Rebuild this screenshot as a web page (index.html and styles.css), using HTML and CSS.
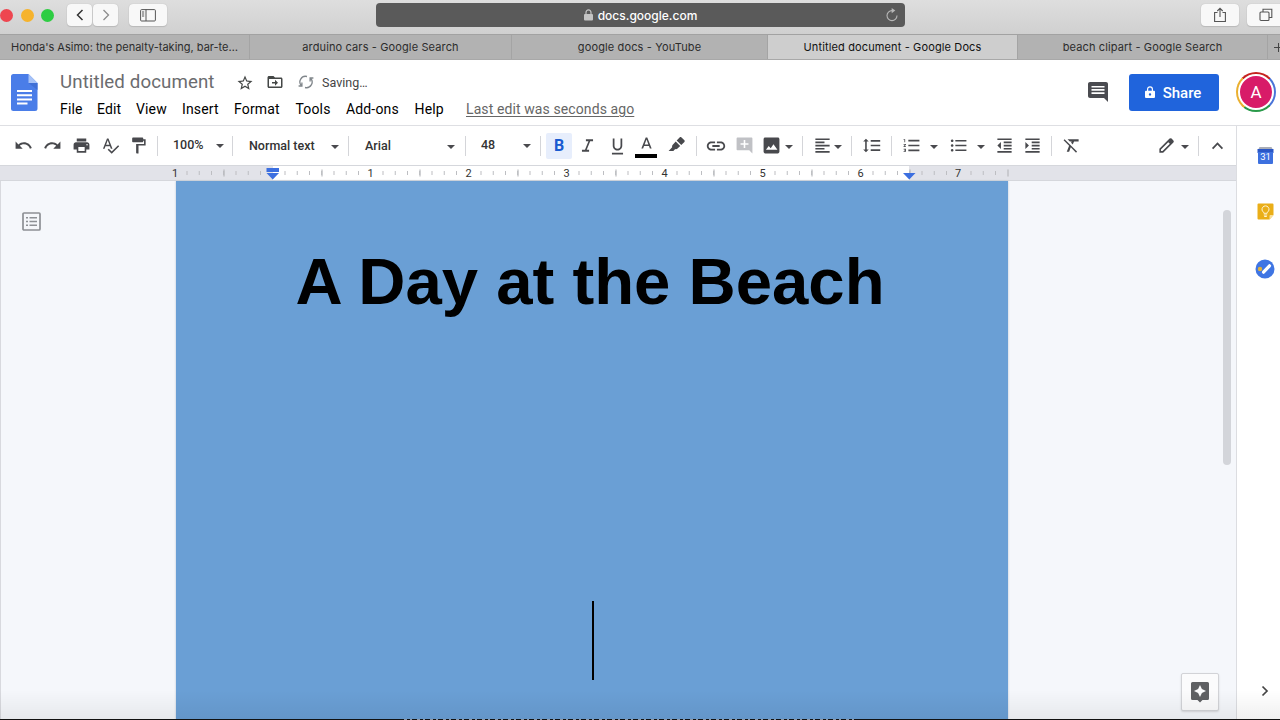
FILE: index.html
```html
<!DOCTYPE html>
<html lang="en">
<head>
  <meta charset="UTF-8">
  <title>Untitled document - Google Docs</title>
  <link rel="stylesheet" href="styles.css">
</head>
<body>
  <div class="titlebar">
    <div class="lights">
      <span class="light red"></span>
      <span class="light yellow"></span>
      <span class="light green"></span>
    </div>
    <div class="nav-btns">
      <span class="win-btn"><svg width="8" height="12" viewBox="0 0 8 12"><path d="M6.5 1 1.5 6l5 5" fill="none" stroke="#333" stroke-width="1.5"/></svg></span>
      <span class="win-btn"><svg width="8" height="12" viewBox="0 0 8 12"><path d="M1.5 1l5 5-5 5" fill="none" stroke="#8c8c8c" stroke-width="1.3"/></svg></span>
    </div>
    <span class="win-btn wide"><svg width="16" height="13" viewBox="0 0 16 13" fill="none" stroke="#555"><rect x=".6" y=".6" width="14.8" height="11.4" rx="1"/><path d="M6 .5v11.5M2 3h2.2M2 5h2.2M2 7h2.2"/></svg></span>
    <div class="address">
      <svg width="9" height="12" viewBox="0 0 9 12"><path d="M2 5V3.4a2.5 2.5 0 0 1 5 0V5" fill="none" stroke="#c4c4c4" stroke-width="1.2"/><rect y="5" width="9" height="6.5" rx="1" fill="#c4c4c4"/></svg>
      <span>docs.google.com</span>
      <svg class="reload" width="14" height="14" viewBox="0 0 14 14"><path d="M7 2.600A5 5 0 1 0 12 7.600" fill="none" stroke="#b8b8b8" stroke-width="1.1"/><path d="M6.7 0l3.6 2.6-3.6 2.6z" fill="#b8b8b8"/></svg>
    </div>
    <span class="win-btn wide share-page"><svg width="14" height="16" viewBox="0 0 14 16" fill="none" stroke="#555" stroke-width="1.1"><path d="M4.5 5.5H1.6v9h10.8v-9H9.5M7 10V1.5M4.3 4 7 1.3 9.7 4"/></svg></span>
    <span class="win-btn wide"><svg width="14" height="14" viewBox="0 0 14 14" fill="none" stroke="#555" stroke-width="1.1"><rect x="1" y="4" width="9" height="8.5" rx="1"/><path d="M4 4V1.3h8.8V9.500H10"/></svg></span>
  </div>

  <div class="tabs">
    <div class="tab first">Honda's Asimo: the penalty-taking, bar-te…</div>
    <div class="tab">arduino cars - Google Search</div>
    <div class="tab">google docs - YouTube</div>
    <div class="tab active">Untitled document - Google Docs</div>
    <div class="tab">beach clipart - Google Search</div>
    <div class="new-tab"><svg width="9" height="9" viewBox="0 0 9 9"><path d="M0 4.500h9M4.500 0v9" stroke="#444"/></svg></div>
  </div>

  <header class="header">
    <svg class="docs-logo" width="27" height="37" viewBox="0 0 27 37">
      <path d="M2.500 0H17.500L26.500 9V34.500a2.500 2.500 0 0 1-2.500 2.500H2.500A2.500 2.500 0 0 1 0 34.500V2.500A2.500 2.500 0 0 1 2.500 0z" fill="#4a7de8"/>
      <path d="M17.500 0l9 9h-9z" fill="#a6c2f7"/>
      <path d="M17.500 9h9v7z" fill="#3f6fd6"/>
      <path d="M6 17h15M6 21.200h15M6 25.400h15M6 29.600h10.500" stroke="#fff" stroke-width="2"/>
    </svg>
    <div class="doc-info">
      <div class="doc-row">
        <span class="doc-title">Untitled document</span>
        <svg class="star" width="18" height="18" viewBox="0 0 24 24" fill="#444746"><path d="M22 9.240l-7.190-.62L12 2 9.190 8.630 2 9.240l5.460 4.730L5.820 21 12 17.270 18.180 21l-1.630-7.030L22 9.240zM12 15.400l-3.760 2.270 1-4.280-3.320-2.880 4.380-.38L12 6.100l1.710 4.040 4.380.38-3.320 2.880 1 4.280L12 15.400z"/></svg>
        <svg class="move" width="18" height="18" viewBox="0 0 24 24" fill="#444746"><path d="M20 6h-8l-2-2H4c-1.100 0-2 .9-2 2v12c0 1.100.9 2 2 2h16c1.100 0 2-.9 2-2V8c0-1.100-.9-2-2-2zm0 12H4V8h16V18zm-8-1l4-4-4-4v3H8v2h4z"/></svg>
        <svg class="sync" width="16" height="16" viewBox="0 0 16 16" fill="none" stroke="#80868b" stroke-width="1.300"><path d="M3.500 11.800A5.600 5.600 0 0 1 9 2.500M12.500 4.200A5.600 5.600 0 0 1 7 13.500M.6 12h3.300V8.500M15.400 4h-3.300v3.500"/></svg>
        <span class="saving">Saving…</span>
      </div>
      <nav class="menu">
        <span>File</span>
        <span>Edit</span>
        <span>View</span>
        <span>Insert</span>
        <span>Format</span>
        <span>Tools</span>
        <span>Add-ons</span>
        <span>Help</span>
        <span class="last-edit">Last edit was seconds ago</span>
      </nav>
    </div>
    <svg class="comments" width="24" height="24" viewBox="0 0 24 24" fill="#4a4b50"><path d="M22 4c0-1.100-.9-2-2-2H4c-1.100 0-2 .9-2 2v12c0 1.100.9 2 2 2h14l4 4V4zM18.500 14H5.500v-1.700h13V14zm0-3.200H5.500V9.100h13v1.700zm0-3.200H5.500V5.900h13v1.700z"/></svg>
    <div class="share">
      <svg width="10" height="13" viewBox="0 0 10 13"><path d="M2.600 5V3.200a2.400 2.400 0 0 1 4.800 0V5" fill="none" stroke="#fff" stroke-width="1.200"/><path d="M1 4.700h8a1 1 0 0 1 1 1V11a1 1 0 0 1-1 1H1a1 1 0 0 1-1-1V5.700a1 1 0 0 1 1-1zm4 2.500a1.200 1.200 0 1 0 0 2.400 1.200 1.200 0 0 0 0-2.400z" fill="#fff"/></svg>
      <span>Share</span>
    </div>
    <div class="avatar"><span>A</span></div>
  </header>

  <div class="workspace">
    <main class="editor">
      <div class="toolbar">
        <svg class="ic" viewBox="0 0 24 24"><path d="M12.500 8c-2.650 0-5.050.99-6.900 2.600L2 7v9h9l-3.620-3.620c1.390-1.160 3.160-1.880 5.120-1.880 3.540 0 6.550 2.310 7.600 5.500l2.370-.78C21.080 11.030 17.150 8 12.500 8z"/></svg>
        <svg class="ic" viewBox="0 0 24 24"><path d="M18.400 10.600C16.550 8.990 14.150 8 11.500 8c-4.650 0-8.580 3.030-9.960 7.220L3.900 16c1.050-3.190 4.050-5.500 7.600-5.500 1.950 0 3.730.72 5.120 1.880L13 16h9V7l-3.600 3.600z"/></svg>
        <svg class="ic" viewBox="0 0 24 24"><path d="M19 8H5c-1.660 0-3 1.340-3 3v6h4v4h12v-4h4v-6c0-1.660-1.340-3-3-3zm-3 11H8v-5h8v5zm3-7c-.55 0-1-.45-1-1s.45-1 1-1 1 .45 1 1-.45 1-1 1zm-1-9H6v4h12V3z"/></svg>
        <svg class="ic" viewBox="0 0 24 24"><path d="M12.450 16h2.090L9.430 3H7.570L2.460 16h2.090l1.120-3h5.640l1.140 3zm-6.020-5L8.500 5.480 10.570 11H6.430zm15.160.59l-8.090 8.090L9.830 16l-1.410 1.410 5.090 5.090L23 13l-1.410-1.410z"/></svg>
        <svg class="ic" viewBox="0 0 24 24"><path d="M18 4V3c0-.55-.45-1-1-1H5c-.55 0-1 .45-1 1v4c0 .55.450 1 1 1h12c.55 0 1-.45 1-1V6h1v4H9v11c0 .55.450 1 1 1h2V12h9V4h-3z"/></svg>
        <i class="sep"></i>
        <div class="select zoom">100%<i class="caret"></i></div>
        <i class="sep"></i>
        <div class="select">Normal text<i class="caret"></i></div>
        <i class="sep"></i>
        <div class="select">Arial<i class="caret"></i></div>
        <i class="sep"></i>
        <div class="select size">48<i class="caret"></i></div>
        <i class="sep"></i>
        <div class="bold">B</div>
        <svg class="ic" viewBox="0 0 24 24"><path d="M10 4v2.500h3.200L8.800 17.500H5V20h9v-2.500h-3L15.400 6.500H19V4z"/></svg>
        <svg class="ic underline" viewBox="0 0 24 24"><path d="M12 17c3.310 0 6-2.690 6-6V2h-2.200v9c0 2.200-1.600 3.900-3.800 3.900S8.200 13.200 8.200 11V2H6v9c0 3.310 2.690 6 6 6zm-7 3v2.200h14V20H5z"/></svg>
        <div class="color"><svg class="ic" viewBox="0 0 24 24"><path d="M11 3L5.500 17h2.250l1.120-3h6.250l1.120 3h2.250L13 3h-2zm-1.380 9L12 5.670 14.380 12H9.620z"/></svg></div>
        <svg class="ic" viewBox="0 0 24 24"><path d="M18 1.500l4 4c.6.600.6 1.400 0 2l-4 4-5.800-5.800 4-4c.6-.6 1.300-.6 1.800-.2zM11 7l5.700 5.700-3.700 3.500c-.6.6-1.700.7-2.600.3L8 19H2l4.500-4.700c-.3-1-.2-2 .5-2.800z"/></svg>
        <i class="sep"></i>
        <svg class="ic link" viewBox="0 0 24 24"><path d="M3.900 12c0-1.710 1.390-3.100 3.100-3.100h4V7H7c-2.760 0-5 2.240-5 5s2.240 5 5 5h4v-1.900H7c-1.710 0-3.100-1.390-3.100-3.100zM8 13h8v-2H8v2zm9-6h-4v1.900h4c1.710 0 3.100 1.390 3.100 3.100s-1.390 3.100-3.100 3.100h-4V17h4c2.760 0 5-2.240 5-5s-2.240-5-5-5z"/></svg>
        <svg class="ic disabled" viewBox="0 0 24 24"><path d="M22 3c0-.55-.45-1-1-1H3c-.55 0-1 .45-1 1v14c0 .55.450 1 1 1h15l4 4V3zm-5 8h-4v4h-2v-4H7V9h4V5h2v4h4v2z"/></svg>
        <svg class="ic" viewBox="0 0 24 24"><path d="M22 20V4c0-1.100-.9-2-2-2H4c-1.100 0-2 .9-2 2v16c0 1.100.9 2 2 2h16c1.100 0 2-.9 2-2zM5 17.500l3.500-5 2.500 3 3.500-5 5 7z"/></svg>
        <i class="caret"></i>
        <i class="sep"></i>
        <svg class="ic" viewBox="0 0 24 24"><path d="M14.500 15H3v2.200h11.500V15zm0-8H3v2.200h11.500V7zM3 13.200h18V11H3v2.200zM3 21.200h18V19H3v2.200zM3 3v2.200h18V3H3z"/></svg>
        <i class="caret"></i>
        <i class="sep"></i>
        <svg class="ic" viewBox="0 0 24 24"><path d="M6 7h2.500L5 3.500 1.500 7H4v10H1.500L5 20.500 8.500 17H6V7zm5-2v2.200h12V5H11zm0 14h12v-2.200H11V19zm0-5.900h12v-2.200H11v2.200z"/></svg>
        <i class="sep"></i>
        <svg class="ic" viewBox="0 0 24 24"><path d="M2 17h2v.5H3v1h1v.5H2v1h3v-4H2v1zm1-9h1V4H2v1h1v3zm-1 3h1.800L2 13.100v.9h3v-1H3.200L5 10.900V10H2v1zm6-6.200V7h14V4.800H8zM8 19.200h14V17H8v2.200zm0-6.100h14v-2.200H8v2.200z"/></svg>
        <i class="caret"></i>
        <svg class="ic" viewBox="0 0 24 24"><path d="M4 10.300c-.9 0-1.700.8-1.700 1.700s.8 1.700 1.700 1.700 1.700-.8 1.700-1.700-.8-1.700-1.700-1.700zm0-6c-.9 0-1.700.8-1.700 1.700s.8 1.700 1.700 1.700S5.700 6.900 5.700 6 4.900 4.300 4 4.300zm0 12c-.9 0-1.700.8-1.700 1.700s.8 1.700 1.700 1.700 1.700-.8 1.700-1.700-.8-1.700-1.700-1.700zM8 19.100h14v-2.200H8v2.200zm0-6h14v-2.200H8v2.200zm0-8.200v2.200h14V4.900H8z"/></svg>
        <i class="caret"></i>
        <svg class="ic" viewBox="0 0 24 24"><path d="M11 17.200h10V15H11v2.200zM3 12l4.500 4.500v-9L3 12zm0 9.200h18V19H3v2.200zM3 3v2.200h18V3H3zm8 6.200h10V7H11v2.200zm0 4h10V11H11v2.200z"/></svg>
        <svg class="ic" viewBox="0 0 24 24"><path d="M3 21.200h18V19H3v2.200zM3 7.500v9L7.500 12 3 7.500zm8 9.700h10V15H11v2.200zM3 3v2.200h18V3H3zm8 6.200h10V7H11v2.200zm0 4h10V11H11v2.200z"/></svg>
        <i class="sep"></i>
        <svg class="ic" viewBox="0 0 24 24"><path d="M3.270 4L2 5.270l6.970 6.970L6 20h3l2.070-5.660L17.730 21 19 19.730 3.550 4.270 3.270 4zM7 4v.18L9.820 7h2.400l-.72 1.680 2.100 2.100L15.210 7H21V4H7z"/></svg>
        <i></i>
        <svg class="ic" viewBox="0 0 24 24"><path d="M20.700 5.600l-2.300-2.300a1.800 1.800 0 0 0-2.500 0L3 16.200V21h4.800L20.700 8.100a1.800 1.800 0 0 0 0-2.500zM7 19H5v-2L14.200 7.800l2 2L7 19z"/></svg>
        <i class="caret"></i>
        <i class="sep"></i>
        <svg class="ic" viewBox="0 0 24 24"><path d="M12 8l-7 7 1.600 1.600L12 11.200l5.400 5.400L19 15z"/></svg>
      </div>

      <svg class="ruler" width="1236" height="16" viewBox="0 0 1236 16">
        <rect width="1236" height="16" fill="#e2e3e9"/>
        <rect x="273" width="636" height="16" fill="#fff"/>
        <path d="M0 .5H1236M0 15.500H1236" stroke="#d5d7dc"/>
        <path d="M186.500 8H1007" stroke="#bdbec2" stroke-width="4" stroke-dasharray="1 11.250 1 11.250 1 11.250 1 11.250 1 11.250 1 11.250 1 23.500"/>
        <path d="M223.500 8H1009" stroke="#b0b1b5" stroke-width="7" stroke-dasharray="1 97"/>
        <g class="ruler-num">
          <text x="175" y="12">1</text>
          <text x="370.500" y="12">1</text>
          <text x="468.500" y="12">2</text>
          <text x="566.500" y="12">3</text>
          <text x="664.500" y="12">4</text>
          <text x="762.500" y="12">5</text>
          <text x="860.500" y="12">6</text>
          <text x="958" y="12">7</text>
        </g>
        <path d="M266.500 3h12.500v4h-12.500zM266.500 8h12.500l-6.250 6.500zM903 8h12.500l-6.250 6.500z" fill="#3c6fe0"/>
      </svg>

      <div class="canvas">
        <div class="outline">
          <svg width="19" height="19" viewBox="0 0 19 19" fill="none" stroke="#8d9095"><rect x="1" y="1" width="17" height="17" rx="1" stroke-width="1.700"/><path d="M4 5.700h2M7.500 5.700H15M4 9.500h2M7.500 9.500H15M4 13.300h2M7.500 13.300H15" stroke-width="1.500"/></svg>
        </div>
        <div class="page">
          <h1>A Day at the Beach</h1>
          <div class="cursor"></div>
        </div>
        <div class="right">
          <div class="scrollbar"></div>
          <div class="explore"><svg width="20" height="22" viewBox="0 0 20 22"><path d="M2.500 1h15A1.500 1.500 0 0 1 19 2.500v15a1.500 1.500 0 0 1-1.500 1.500H12.500L10 21.500 7.500 19h-5A1.500 1.500 0 0 1 1 17.500v-15A1.500 1.500 0 0 1 2.500 1zM10 4l-1.900 4.100L4 10l4.100 1.900L10 16l1.900-4.100L16 10l-4.100-1.900z" fill="#5f6063"/></svg></div>
        </div>
      </div>
    </main>

    <aside class="side">
      <svg width="17" height="17" viewBox="0 0 17 17"><path d="M2.500 0h12L16 3H1z" fill="#a9adb7"/><path d="M.5 2h16v4h-16z" fill="#2a56c6"/><path d="M1 5h15v11a1 1 0 0 1-1 1H2a1 1 0 0 1-1-1z" fill="#3d70df"/><text x="8.500" y="13" class="cal-day">31</text></svg>
      <svg width="17" height="17" viewBox="0 0 17 17"><path d="M1.500 .5h14a1 1 0 0 1 1 1V12l-4 4.500h-11a1 1 0 0 1-1-1v-14a1 1 0 0 1 1-1z" fill="#eaae18"/><path d="M12.500 16.500V13a1 1 0 0 1 1-1h3z" fill="#fbe09a"/><path d="M6.900 10.300V9.500a3.500 3.500 0 1 1 3.200 0v.8zM6.800 12h3.400M7.200 13.500h2.600" fill="none" stroke="#fff5d8"/></svg>
      <svg width="20" height="20" viewBox="0 0 20 20"><circle cx="10" cy="10" r="9.500" fill="#3f75e3"/><circle cx="5" cy="10" r="2.200" fill="#e0b13c"/><path d="M8.500 13.200l6-6.400" stroke="#fff" stroke-width="3.200" stroke-linecap="round"/></svg>
      <svg class="expand" width="8" height="12" viewBox="0 0 8 12"><path d="M1.500 1.500L6 6l-4.500 4.500" fill="none" stroke="#444" stroke-width="1.700"/></svg>
    </aside>
  </div>
  <div class="bottom-fade"><div class="cut-line"></div></div>
</body>
</html>
```

FILE: styles.css
```css
* {
  box-sizing: border-box;
}
body {
  margin: 0;
  width: 1280px;
  height: 720px;
  overflow: hidden;
  display: flex;
  flex-direction: column;
  background: #fff;
  font-family: Roboto, "Liberation Sans", sans-serif;
  color: #222;
}
svg {
  display: block;
  flex: none;
}

/* browser window */
.titlebar {
  flex: none;
  height: 34px;
  padding-bottom: 4px;
  display: flex;
  align-items: center;
  background: linear-gradient(#dedede, #d0d0d0);
}
.lights {
  display: flex;
  flex: none;
  gap: 7.5px;
  width: 67px;
}
.light {
  width: 13px;
  height: 13px;
  border-radius: 50%;
  flex: none;
}
.red { background: #ee4650; }
.yellow { background: #f6b32c; }
.green { background: #2ecd43; }
.nav-btns {
  display: flex;
  flex: none;
  gap: 1px;
  margin-right: 11px;
}
.win-btn {
  width: 25px;
  height: 22px;
  display: flex;
  align-items: center;
  justify-content: center;
  border-radius: 4px;
  background: #f8f8f8;
  box-shadow: 0 0 1px #aaa, 0 1px 1px #bbb;
}
.win-btn.wide {
  width: 38px;
  flex: none;
}
.address {
  position: relative;
  width: 529px;
  height: 24px;
  margin: 0 296px 0 209px;
  display: flex;
  flex: none;
  align-items: center;
  justify-content: center;
  gap: 5px;
  border-radius: 4px;
  background: #5a5a5a;
  color: #fff;
  font: 500 12px Inter, sans-serif;
}
.reload {
  position: absolute;
  right: 6px;
  top: 5px;
}
.share-page {
  margin-right: 8px;
}

.tabs {
  flex: none;
  height: 26px;
  display: grid;
  grid-template-columns: 250px 262px 256px 250px 250px 12px;
  background: #b2b2b2;
  border-top: 1px solid #a2a2a2;
  border-bottom: 1px solid #a8a8a8;
  font: 11px Inter, sans-serif;
  letter-spacing: 0.13px;
  color: #2c2c2c;
}
.tab {
  display: flex;
  align-items: center;
  justify-content: center;
  white-space: nowrap;
  border-right: 1px solid #a4a4a4;
}
.tab.first {
  letter-spacing: 0;
}
.tab.active {
  background: #cecece;
  color: #111;
}
.new-tab {
  display: flex;
  align-items: center;
  padding-left: 6px;
  overflow: hidden;
}

/* docs header */
.header {
  flex: none;
  height: 66px;
  display: flex;
  align-items: flex-start;
  border-bottom: 1px solid #dedfe3;
}
.docs-logo {
  margin: 14px 22px 0 11px;
}
.doc-info {
  width: 1027px;
}
.doc-row {
  display: flex;
  align-items: center;
  height: 24px;
  margin-top: 10px;
}
.doc-title {
  width: 176px;
  font-size: 18.7px;
  letter-spacing: 0.1px;
  color: #6b6c6f;
}
.star {
  margin-top: 2px;
  margin-right: 12px;
}
.move {
  margin-right: 14px;
}
.sync {
  margin-right: 8px;
}
.saving {
  font-size: 12.5px;
  color: #444;
}
.menu {
  display: grid;
  grid-template-columns: 37px 39px 46px 52px 61.5px 50.5px 68.5px 51.5px auto;
  justify-content: start;
  margin-top: 7px;
  font-size: 14px;
  line-height: 17px;
  letter-spacing: 0.15px;
  color: #000;
}
.menu span {
  white-space: nowrap;
}
.menu .last-edit {
  color: #666;
  letter-spacing: 0.1px;
  text-decoration: underline;
  text-underline-offset: 2px;
}
.comments {
  margin: 20px 19px 0 -1px;
}
.share {
  flex: none;
  width: 90px;
  height: 37px;
  margin: 14px 17px 0 0;
  display: flex;
  align-items: center;
  justify-content: center;
  gap: 8px;
  padding-right: 2px;
  border-radius: 3px;
  background: #2064dc;
  color: #fff;
  font-size: 15px;
  font-weight: 500;
}
.avatar {
  flex: none;
  width: 40px;
  height: 40px;
  margin-top: 12px;
  padding: 2px;
  border-radius: 50%;
  background: conic-gradient(from -45deg, #c5221f 0 90deg, #4a74d8 90deg 180deg, #2a9a4a 180deg 262deg, #eab030 262deg 360deg);
}
.avatar span {
  display: flex;
  align-items: center;
  justify-content: center;
  height: 100%;
  border: 2px solid #fff;
  border-radius: 50%;
  background: #d81b68;
  color: #fff;
  font-size: 17px;
}

/* editor */
.workspace {
  flex: 1;
  display: flex;
  min-height: 0;
}
.editor {
  width: 1236px;
  display: flex;
  flex-direction: column;
}
.toolbar {
  flex: none;
  height: 39px;
  padding: 0 10px 0 9px;
  display: grid;
  grid-template-columns:
    29px 29px 28px 30px 27px 10px
    65px 11px 105px 11px 105px 12px 64px 11px
    26px 31px 28px 30px 30px 11px
    27px 30px 25px 9px 19px
    20px 12px 15px 25px 15px
    25px 20px 29px 16px 30px 27px 11px
    28px 1fr 28px 9px 19px 18px;
  align-items: center;
  justify-items: center;
}
.ic {
  width: 19px;
  height: 19px;
  fill: #48494d;
}
.link {
  width: 22px;
  height: 22px;
}
.underline {
  margin-top: 2px;
}
.disabled {
  fill: #c0c1c5;
}
.sep {
  width: 1px;
  height: 20px;
  background: #d4d5d9;
}
.caret {
  border: 4px solid transparent;
  border-top-color: #4a4a4e;
  border-bottom: 0;
  margin-top: 2px;
}
.select {
  width: 100%;
  padding: 0 4px 0 11px;
  display: flex;
  align-items: center;
  justify-content: space-between;
  font-size: 12.5px;
  font-weight: 500;
  color: #333;
}
.select.zoom {
  padding: 0 3px 2px 11px;
}
.select.size {
  padding: 0 4px 2px 10px;
}
.bold {
  width: 26px;
  height: 26px;
  border-radius: 2px;
  background: #e7eefc;
  color: #1a5bd0;
  font-size: 16px;
  font-weight: 700;
  line-height: 26px;
  text-align: center;
}
.color {
  width: 22px;
  height: 23px;
  margin-top: 2px;
  border-bottom: 4px solid #000;
  display: flex;
  justify-content: center;
}
.ruler {
  background: #e2e3e9;
}
.ruler-num {
  font-size: 11px;
  fill: #333;
  text-anchor: middle;
}
.canvas {
  flex: 1;
  display: grid;
  grid-template-columns: 176px 832px 228px;
  border-left: 1px solid #d8d9de;
  margin-right: -1px;
  background: #f5f7fb;
}
.outline {
  padding: 31px 0 0 21px;
}
.page {
  margin-left: -1px;
  width: 832px;
  background: #6a9fd5;
  box-shadow: 0 0 2px #b9c4d2;
}
.page h1 {
  margin: 63px 0 0;
  padding-right: 4px;
  font: bold 65.300px/76px "Liberation Sans", Arial, sans-serif;
  text-align: center;
  color: #000;
}
.cursor {
  width: 2px;
  height: 79px;
  margin: 281px 0 0 416px;
  background: #000;
}
.right {
  display: flex;
  flex-direction: column;
}
.scrollbar {
  width: 8px;
  height: 255px;
  margin: 29px 0 0 214px;
  border-radius: 4px;
  background: #d3d5da;
}
.explore {
  width: 38px;
  height: 38px;
  margin: 208px 0 0 172px;
  display: flex;
  align-items: center;
  justify-content: center;
  border: 1px solid #d2d3d7;
  border-radius: 2px;
  background: #fbfbfc;
  box-shadow: 0 1px 2px #d5d6da;
}
.side {
  width: 44px;
  padding: 21px 0 23px 13px;
  display: flex;
  flex-direction: column;
  align-items: center;
  gap: 39px;
  border-left: 1px solid #dcdde1;
  background: #fff;
}
.cal-day {
  font-size: 9.500px;
  fill: #fff;
  text-anchor: middle;
}
.expand {
  margin-top: auto;
}
.bottom-fade {
  position: absolute;
  left: 0;
  top: 690px;
  width: 1280px;
  height: 30px;
  padding: 29px 0 0 404px;
  background: linear-gradient(rgba(0, 0, 0, 0), rgba(0, 0, 0, 0.06) 29px, #111 29px);
}
/* top edge of the cut-off line below the page */
.cut-line {
  width: 451px;
  height: 1px;
  background: repeating-linear-gradient(90deg, #8d97a5 0 3px, #111 3px 6px, #8d97a5 6px 8px, #111 8px 13px);
}
```
